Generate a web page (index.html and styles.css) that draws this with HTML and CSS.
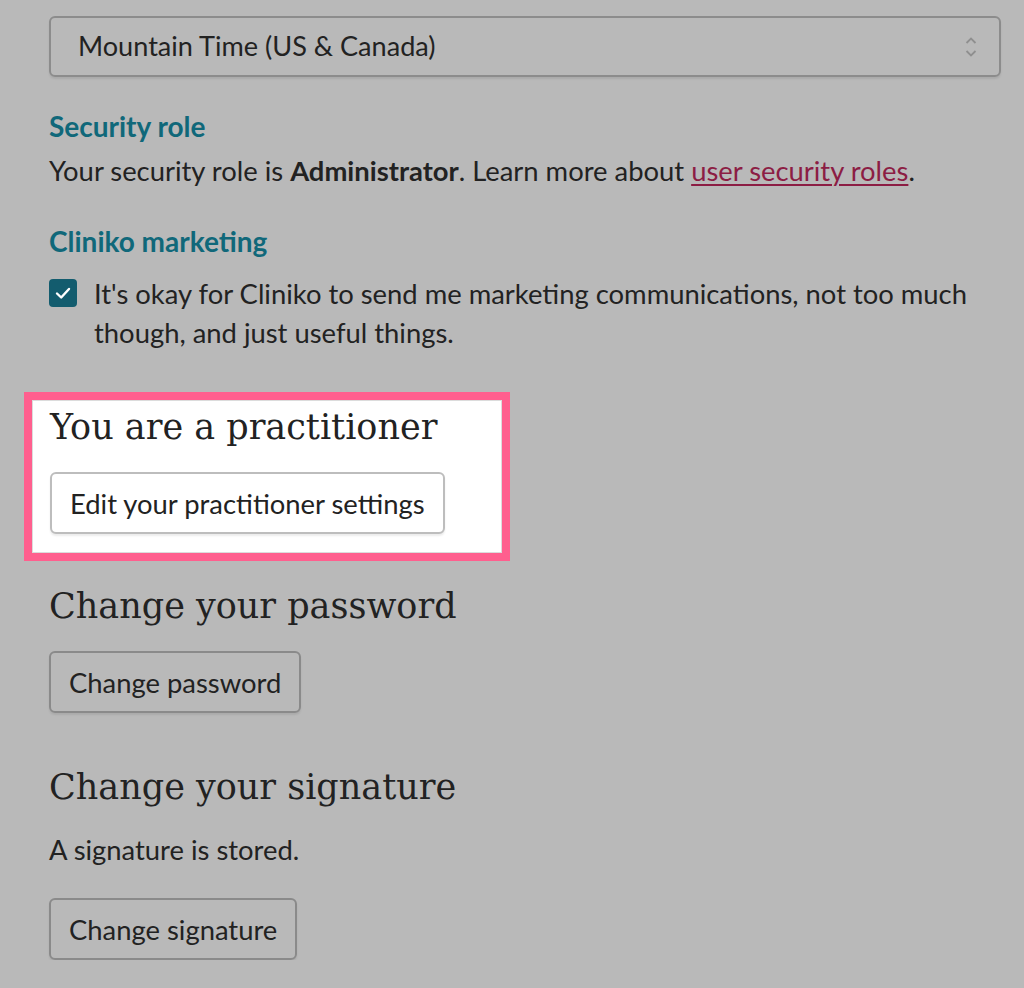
FILE: index.html
```html
<!DOCTYPE html>
<html lang="en">
<head>
<meta charset="utf-8">
<title>Account settings</title>
<link rel="stylesheet" href="styles.css">
</head>
<body>
<main class="page">
  <div class="select">
    <span class="select-value">Mountain Time (US &amp; Canada)</span>
    <svg class="select-caret" width="16" height="30" viewBox="0 0 16 30" aria-hidden="true">
      <path d="M3.5 11 L8 6.5 L12.5 11" fill="none" stroke="#8f8f8f" stroke-width="1.8"/>
      <path d="M3.5 19 L8 23.5 L12.5 19" fill="none" stroke="#8f8f8f" stroke-width="1.8"/>
    </svg>
  </div>

  <h3 class="label label-first">Security role</h3>
  <p class="text">Your security role is <strong>Administrator</strong>. Learn more about <a class="link" href="#">user security roles</a>.</p>

  <h3 class="label label-next">Cliniko marketing</h3>
  <label class="check-row">
    <span class="checkbox">
      <svg width="28" height="28" viewBox="0 0 28 28" aria-hidden="true">
        <path d="M8 14.5 L12.2 18.5 L20 10" fill="none" stroke="#ffffff" stroke-width="2.4" stroke-linecap="round" stroke-linejoin="round"/>
      </svg>
    </span>
    <span class="check-text">It's okay for Cliniko to send me marketing communications, not too much though, and just useful things.</span>
  </label>

  <section class="highlight">
    <div class="highlight-inner">
      <h2 class="heading">You are a practitioner</h2>
      <button class="btn btn-light" type="button">Edit your practitioner settings</button>
    </div>
  </section>

  <h2 class="heading heading-pw">Change your password</h2>
  <button class="btn" type="button">Change password</button>

  <h2 class="heading heading-sig">Change your signature</h2>
  <p class="text text-sig">A signature is stored.</p>
  <button class="btn btn-sig" type="button">Change signature</button>
</main>
</body>
</html>
```

FILE: styles.css
```css
html, body {
  margin: 0;
  padding: 0;
  background: #b9b9b9;
}

body {
  font-family: "Lato", "Liberation Sans", sans-serif;
  color: #222222;
  font-size: 27.4px;
}

.page {
  padding: 16px 23px 0 49px;
  display: flex;
  flex-direction: column;
  align-items: flex-start;
}

.select {
  box-sizing: border-box;
  width: 952px;
  height: 61px;
  border: 2px solid #8c8c8c;
  border-radius: 6px;
  display: flex;
  align-items: center;
  justify-content: space-between;
  padding: 0 20px 0 27px;
  box-shadow: 0 2px 2px rgba(0,0,0,0.08);
}

.select-value {
  font-size: 27.1px;
  color: #222;
  margin-top: -2px;
}

.select-caret {
  display: block;
}

.label {
  margin: 0 0 8px;
  font-size: 28px;
  line-height: 34px;
  font-weight: 700;
  color: #10687a;
}

.label-first { margin-top: 32px; }
.label-next { margin-top: 34px; }

.text {
  margin: 0;
  line-height: 39px;
}

.text strong { font-weight: 700; }

.link {
  color: #8c1d44;
  text-decoration: underline;
  text-underline-offset: 3px;
  text-decoration-thickness: 2px;
}

.check-row {
  margin-top: 8px;
  display: flex;
  align-items: flex-start;
  gap: 17px;
  line-height: 39px;
}

.checkbox {
  flex: none;
  width: 28px;
  height: 28px;
  margin-top: 5px;
  background: #135c6e;
  border-radius: 4px;
  display: block;
}

.checkbox svg { display: block; }

.check-text {
  max-width: 900px;
}

.highlight {
  margin: 40px 0 0 -25px;
  width: 486px;
  box-sizing: border-box;
  border: 8px solid #ff5f8e;
  background: #ffffff;
}

.highlight-inner {
  padding: 4px 17px 18px;
  border: 1px solid #dcdcdc;
  display: flex;
  flex-direction: column;
  align-items: flex-start;
}

.heading {
  margin: 0;
  font-family: "DejaVu Serif", "Liberation Serif", serif;
  font-weight: 400;
  font-size: 35px;
  line-height: 44px;
  color: #222;
}

.heading-pw { margin-top: 23px; }
.heading-sig { margin-top: 52px; }

.btn {
  margin-top: 23px;
  box-sizing: border-box;
  height: 62px;
  padding: 0 18px;
  border: 2px solid #8a8a8a;
  border-radius: 6px;
  background: transparent;
  font-family: "Lato", "Liberation Sans", sans-serif;
  font-size: 27.4px;
  color: #222;
  box-shadow: 0 2px 2px rgba(0,0,0,0.08);
}

.btn-light {
  border-color: #bdbdbd;
  background: #ffffff;
}

.text-sig { margin-top: 21px; }
.btn-sig { margin-top: 29px; }
```
